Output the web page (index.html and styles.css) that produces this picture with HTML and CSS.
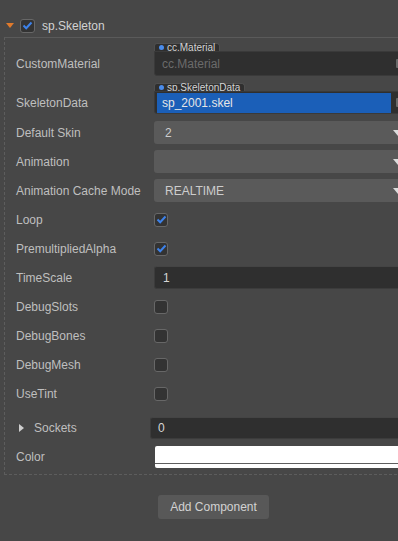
FILE: index.html
```html
<!DOCTYPE html>
<html>
<head>
<meta charset="utf-8">
<link rel="stylesheet" href="styles.css">
</head>
<body>
<div class="header">
  <span class="fold"></span>
  <span class="cb cb-head"><svg width="11" height="11" viewBox="0 0 11 11"><polyline points="1.5,5.5 4.2,8.2 9.5,2.5" fill="none" stroke="#3d82ea" stroke-width="2"/></svg></span>
  <span class="title">sp.Skeleton</span>
</div>
<div class="comp">
  <div class="arow">
    <div class="label lbl-a1">CustomMaterial</div>
    <div class="afield">
      <div class="tab"><span class="dot"></span>cc.Material</div>
      <div class="abody abody-1"><div class="amain"><span class="placeholder">cc.Material</span></div><span class="abtn"></span></div>
    </div>
  </div>
  <div class="arow arow-2">
    <div class="label lbl-a2">SkeletonData</div>
    <div class="afield">
      <div class="tab"><span class="dot"></span>sp.SkeletonData</div>
      <div class="abody abody-2"><div class="amain sel"><span>sp_2001.skel</span></div><span class="abtn"></span></div>
    </div>
  </div>

  <div class="rows">
    <div class="row"><div class="label">Default Skin</div><div class="select"><span>2</span><span class="arrow"></span></div></div>
    <div class="row"><div class="label">Animation</div><div class="select"><span></span><span class="arrow"></span></div></div>
    <div class="row"><div class="label">Animation Cache Mode</div><div class="select"><span>REALTIME</span><span class="arrow"></span></div></div>
    <div class="row"><div class="label">Loop</div><span class="cb"><svg width="11" height="11" viewBox="0 0 11 11"><polyline points="1.5,5.5 4.2,8.2 9.5,2.5" fill="none" stroke="#3d82ea" stroke-width="2"/></svg></span></div>
    <div class="row"><div class="label">PremultipliedAlpha</div><span class="cb"><svg width="11" height="11" viewBox="0 0 11 11"><polyline points="1.5,5.5 4.2,8.2 9.5,2.5" fill="none" stroke="#3d82ea" stroke-width="2"/></svg></span></div>
    <div class="row"><div class="label">TimeScale</div><div class="input">1</div></div>
    <div class="row"><div class="label">DebugSlots</div><span class="cb"></span></div>
    <div class="row"><div class="label">DebugBones</div><span class="cb"></span></div>
    <div class="row"><div class="label">DebugMesh</div><span class="cb"></span></div>
    <div class="row"><div class="label">UseTint</div><span class="cb"></span></div>
    <div class="row row-sockets"><div class="label label-sockets"><span class="tri"></span>Sockets</div><div class="input input-sockets">0</div></div>
    <div class="row"><div class="label">Color</div><div class="color"><div class="cline"></div></div></div>
  </div>
</div>
<div class="add">Add Component</div>
</body>
</html>
```

FILE: styles.css
```css
html {
  overflow: hidden;
  background: #474747;
}
body {
  margin: 0;
  width: 412px;
  font: 12px "Liberation Sans", Arial, sans-serif;
  color: #bfbfbf;
}
.header {
  display: flex;
  align-items: center;
  height: 23px;
  padding-top: 14px;
}
.fold {
  margin-left: 6px;
  width: 0;
  height: 0;
  border-left: 4px solid transparent;
  border-right: 4px solid transparent;
  border-top: 5px solid #e07a2c;
}
.cb {
  width: 14px;
  height: 14px;
  box-sizing: border-box;
  border: 1px solid #676767;
  border-radius: 3px;
  background: #333333;
  display: flex;
  align-items: center;
  justify-content: center;
}
.cb-head {
  margin-left: 6px;
  width: 15px;
}
.title {
  margin-left: 7px;
  color: #d2d2d2;
}
.comp {
  margin-left: 4px;
  border-top: 1px solid #5a5a5a;
  border-left: 1px dashed #5d5d5d;
  border-bottom: 1px dashed #5d5d5d;
  padding: 5px 0 3px 11px;
}
.label {
  width: 138px;
  flex: none;
  white-space: nowrap;
}
.arow {
  display: flex;
  align-items: flex-end;
}
.arow-2 {
  margin-top: 7px;
}
.lbl-a1 {
  line-height: 23px;
}
.lbl-a2 {
  line-height: 22px;
}
.afield {
  flex: 1;
  display: flex;
  flex-direction: column;
  align-items: flex-start;
}
.tab {
  display: flex;
  align-items: center;
  height: 7px;
  font-size: 10px;
  line-height: 10px;
  padding: 0 4px 0 4px;
  background: #2f2f2f;
  border: 1px solid #4f4f4f;
  border-bottom: none;
  border-radius: 3px 3px 0 0;
  color: #d4d4d4;
}
.dot {
  width: 5px;
  height: 5px;
  border-radius: 50%;
  background: #4a8cec;
  margin-right: 3px;
}
.abody {
  align-self: stretch;
  display: flex;
  align-items: center;
  background: #2f2f2f;
  border: 1px solid #3a3a3a;
  border-radius: 0 3px 3px 3px;
  box-sizing: border-box;
  padding-left: 2px;
}
.abody-1 {
  height: 25px;
}
.abody-2 {
  height: 23px;
}
.amain {
  width: 234px;
  height: 20px;
  display: flex;
  align-items: center;
  padding-left: 5px;
  box-sizing: border-box;
}
.placeholder {
  color: #6b6b6b;
}
.sel {
  background: #1b5fb8;
  color: #e6e6e6;
}
.abtn {
  width: 9px;
  height: 9px;
  margin-left: 5px;
  background: #6a6a6a;
  border-radius: 1px;
}
.rows {
  margin-top: 4px;
}
.row {
  display: flex;
  align-items: center;
  height: 29px;
}
.select {
  flex: 1;
  height: 23px;
  background: #5a5a5a;
  border-radius: 3px;
  display: flex;
  align-items: center;
  padding-left: 11px;
  color: #cdcdcd;
}
.arrow {
  margin-left: auto;
  margin-right: 9px;
  width: 0;
  height: 0;
  border-left: 5px solid transparent;
  border-right: 5px solid transparent;
  border-top: 6px solid #dcdcdc;
}
.input {
  flex: 1;
  height: 23px;
  box-sizing: border-box;
  background: #2f2f2f;
  border: 1px solid #3c3c3c;
  border-top-color: #444444;
  border-radius: 3px;
  display: flex;
  align-items: center;
  padding-left: 8px;
  color: #d6d6d6;
}
.row-sockets {
  margin-top: 5px;
}
.label-sockets {
  width: 134px;
  display: flex;
  align-items: center;
}
.tri {
  margin-left: 3px;
  margin-right: 10px;
  width: 0;
  height: 0;
  border-top: 4px solid transparent;
  border-bottom: 4px solid transparent;
  border-left: 5px solid #cfcfcf;
}
.input-sockets {
  height: 22px;
  padding-left: 7px;
}
.color {
  flex: 1;
  margin-left: 1px;
  height: 22px;
  background: #ffffff;
  border-radius: 2px;
  display: flex;
  flex-direction: column;
}
.cline {
  margin-top: 17px;
  height: 1px;
  background: #5e5e5e;
}
.add {
  margin: 20px 0 0 158px;
  width: 111px;
  height: 24px;
  background: #585858;
  border-radius: 3px;
  color: #d2d2d2;
  display: flex;
  align-items: center;
  justify-content: center;
}
```
